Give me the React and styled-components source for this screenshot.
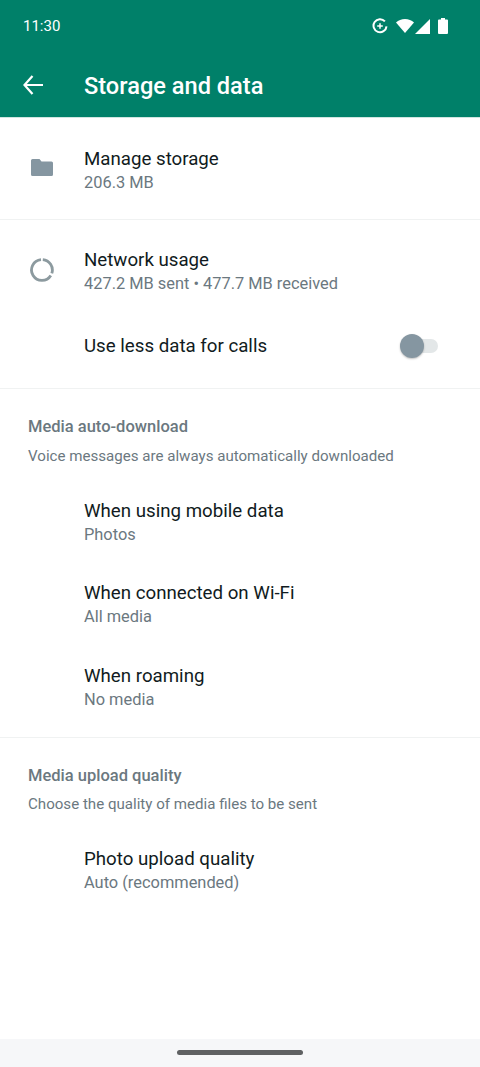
import React from "react";
import styled, { createGlobalStyle } from "styled-components";

const Global = createGlobalStyle`
  html, body {
    margin: 0;
    padding: 0;
    background: #fff;
    font-family: Roboto, "Noto Sans", sans-serif;
  }
`;

const Page = styled.div`
  width: 480px;
  height: 1067px;
  display: flex;
  flex-direction: column;
  overflow: hidden;
  background: #fff;
`;

const Header = styled.header`
  height: 118px;
  box-sizing: border-box;
  flex: none;
  background: #008069;
  color: #fff;
  border-bottom: 1px solid #cfe6e0;
  display: flex;
  flex-direction: column;
`;

const StatusBar = styled.div`
  height: 53px;
  padding: 0 32px 0 23px;
  display: flex;
  align-items: center;
  justify-content: space-between;
  font-size: 15px;
  font-weight: 400;
`;

const StatusIcons = styled.div`
  display: flex;
  align-items: center;
  gap: 8px;
`;

const AppBar = styled.div`
  display: flex;
  align-items: center;
  height: 66px;
  padding-left: 22px;
  gap: 40px;
`;

const Title = styled.h1`
  margin: 0;
  padding-top: 2px;
  font-size: 23.6px;
  font-weight: 500;
`;

const Content = styled.main`
  flex: 1;
`;

const Section = styled.section`
  padding: ${(p) => p.$pad};
  border-bottom: ${(p) => (p.$last ? "none" : "1px solid #f0f2f2")};
`;

const Row = styled.div`
  height: ${(p) => p.$h || 82.5}px;
  display: flex;
  align-items: center;
`;

const IconSlot = styled.div`
  width: 84px;
  flex: none;
  display: flex;
  justify-content: center;
  padding-bottom: ${(p) => p.$lift || 0}px;
`;

const Texts = styled.div`
  flex: 1;
  padding-top: 1px;
`;

const Primary = styled.div`
  font-size: 18.7px;
  line-height: 24px;
  color: #111b21;
`;

const Secondary = styled.div`
  margin-top: 1px;
  font-size: 16.4px;
  line-height: 22px;
  color: #6b787f;
`;

const GroupHead = styled.div`
  padding: 0 28px ${(p) => p.$gap}px;
`;

const GroupTitle = styled.h2`
  margin: 0;
  font-size: 16.5px;
  line-height: 24px;
  font-weight: 500;
  color: #6b787f;
`;

const GroupNote = styled.p`
  margin: ${(p) => p.$top}px 0 0;
  font-size: 15.1px;
  line-height: 22px;
  color: #6b787f;
`;

const Toggle = styled.div`
  position: relative;
  width: 34px;
  height: 14px;
  margin-right: 42px;
  border-radius: 7px;
  background: #e3e7e8;
`;

const Knob = styled.span`
  position: absolute;
  left: -4px;
  top: -5px;
  width: 24px;
  height: 24px;
  border-radius: 50%;
  background: #8596a1;
  box-shadow: 0 1px 2px rgba(0, 0, 0, 0.25);
`;

const NavBar = styled.div`
  height: 28px;
  flex: none;
  background: #f6f7f9;
  display: flex;
  justify-content: center;
  padding-top: 11px;
  box-sizing: border-box;
`;

const Handle = styled.div`
  width: 126px;
  height: 5px;
  border-radius: 3px;
  background: #5f6163;
`;

const Target = () => (
  <svg width="16" height="16" viewBox="0 0 16 16" fill="none" stroke="#fff">
    <path d="M12.9 3.4A6.5 6.5 0 1 0 14.500 8.300" strokeWidth="2" />
    <path d="M8 5.200v5.600M5.200 8h5.600" strokeWidth="1.5" />
  </svg>
);

const Wifi = () => (
  <svg width="18" height="14" viewBox="0 0 18 14" fill="#fff">
    <path d="M0 3.6C2.4 1.4 5.5 0 9 0s6.6 1.4 9 3.6L9 14z" />
  </svg>
);

const Signal = () => (
  <svg width="15" height="15" viewBox="0 0 15 15" fill="#fff" style={{ marginLeft: -7 }}>
    <path d="M15 0v15H0z" />
  </svg>
);

const Battery = () => (
  <svg width="10" height="16" viewBox="0 0 10 16" fill="#fff">
    <path d="M3 0h4v1.5h2a1 1 0 0 1 1 1V15a1 1 0 0 1-1 1H1a1 1 0 0 1-1-1V2.5a1 1 0 0 1 1-1h2z" />
  </svg>
);

const BackArrow = () => (
  <svg width="22" height="22" viewBox="0 0 22 22" fill="none" stroke="#fff" strokeWidth="2.2">
    <path d="M21 11H3M10.5 2 2.500 11l8 9" />
  </svg>
);

const Folder = () => (
  <svg width="22" height="17" viewBox="0 0 22 17" fill="#8596a1">
    <path d="M1.500 0h7l2 2.500h10a1.500 1.500 0 0 1 1.500 1.500v11.500a1.500 1.500 0 0 1-1.500 1.500h-19A1.500 1.500 0 0 1 0 15.500v-14A1.500 1.500 0 0 1 1.500 0z" />
  </svg>
);

const Usage = () => (
  <svg width="24" height="24" viewBox="0 0 24 24" fill="none" stroke="#8c9a9f" strokeWidth="2.8">
    <path d="M12.800 1.700A10.400 10.400 0 0 1 21.800 15.400" />
    <path d="M20.800 17.500A10.400 10.400 0 1 1 11 1.700" />
  </svg>
);

const Item = ({ title, sub, icon, lift }) => (
  <Row>
    <IconSlot $lift={lift}>{icon}</IconSlot>
    <Texts>
      <Primary>{title}</Primary>
      {sub && <Secondary>{sub}</Secondary>}
    </Texts>
  </Row>
);

export default function App() {
  return (
    <Page>
      <Global />
      <Header>
        <StatusBar>
          <span>11:30</span>
          <StatusIcons>
            <Target />
            <Wifi />
            <Signal />
            <Battery />
          </StatusIcons>
        </StatusBar>
        <AppBar>
          <BackArrow />
          <Title>Storage and data</Title>
        </AppBar>
      </Header>
      <Content>
        <Section $pad="11px 0 7.5px">
          <Item title="Manage storage" sub="206.3 MB" icon={<Folder />} lift={5} />
        </Section>
        <Section $pad="10px 0 9px">
          <Item title="Network usage" sub="427.2 MB sent • 477.7 MB received" icon={<Usage />} lift={3} />
          <Row $h={66}>
            <IconSlot />
            <Texts>
              <Primary>Use less data for calls</Primary>
            </Texts>
            <Toggle>
              <Knob />
            </Toggle>
          </Row>
        </Section>
        <Section $pad="26px 0 8.5px">
          <GroupHead $gap={14}>
            <GroupTitle>Media auto-download</GroupTitle>
            <GroupNote $top={6}>Voice messages are always automatically downloaded</GroupNote>
          </GroupHead>
          <Item title="When using mobile data" sub="Photos" />
          <Item title="When connected on Wi-Fi" sub="All media" />
          <Item title="When roaming" sub="No media" />
        </Section>
        <Section $pad="26px 0 0" $last>
          <GroupHead $gap={14}>
            <GroupTitle>Media upload quality</GroupTitle>
            <GroupNote $top={5}>Choose the quality of media files to be sent</GroupNote>
          </GroupHead>
          <Item title="Photo upload quality" sub="Auto (recommended)" />
        </Section>
      </Content>
      <NavBar>
        <Handle />
      </NavBar>
    </Page>
  );
}
